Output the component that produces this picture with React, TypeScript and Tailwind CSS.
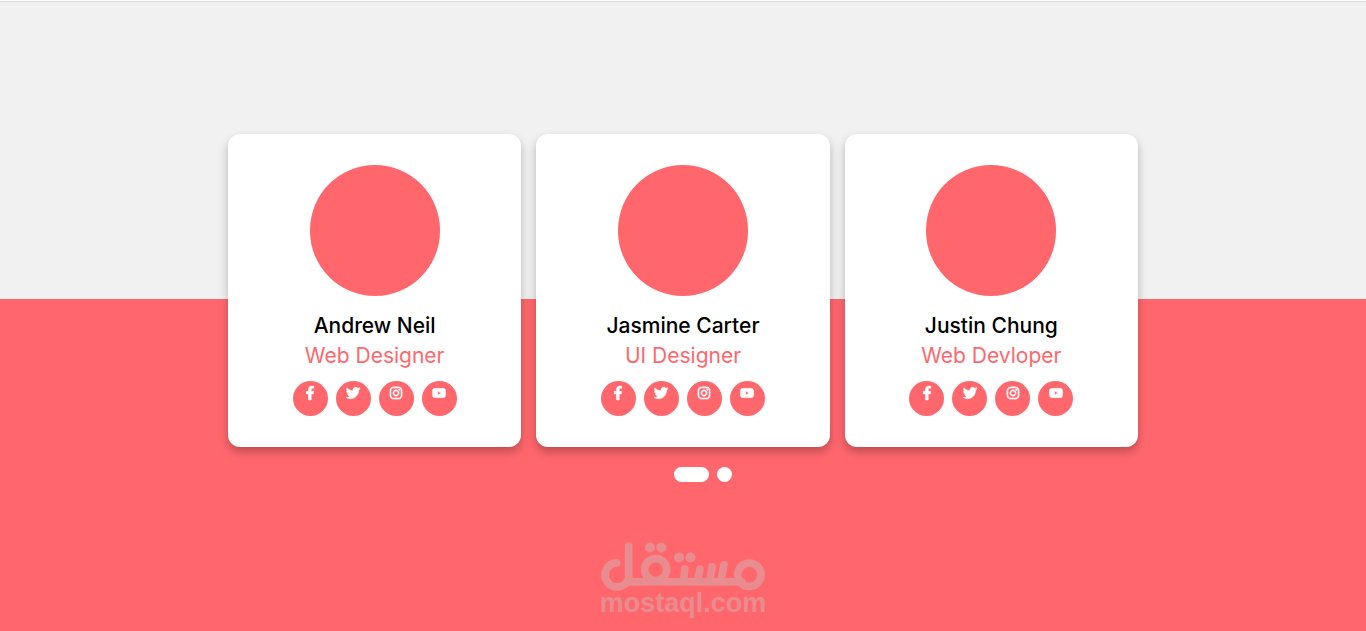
import { useState } from 'react';
import type { IconType } from 'react-icons';
import { FaFacebookF, FaInstagram, FaTwitter, FaYoutube } from 'react-icons/fa';

interface Member {
  name: string;
  job: string;
}

const members: Member[] = [
  { name: 'Andrew Neil', job: 'Web Designer' },
  { name: 'Jasmine Carter', job: 'UI Designer' },
  { name: 'Justin Chung', job: 'Web Devloper' },
];

const socials: { label: string; Icon: IconType }[] = [
  { label: 'Facebook', Icon: FaFacebookF },
  { label: 'Twitter', Icon: FaTwitter },
  { label: 'Instagram', Icon: FaInstagram },
  { label: 'YouTube', Icon: FaYoutube },
];

function MemberCard({ member }: { member: Member }) {
  return (
    <article className="flex flex-col items-center rounded-xl bg-white py-[31px] shadow-[0_5px_10px_rgba(0,0,0,0.25)]">
      <div className="h-[131px] w-[130px] rounded-full bg-[#ff676d]" />
      <h2 className="mt-[15px] text-[21px] leading-[30px] font-medium text-black">{member.name}</h2>
      <p className="text-[21px] leading-[30px] text-[#ff676d]">{member.job}</p>
      <div className="mt-[10px] flex gap-2">
        {socials.map(({ label, Icon }) => (
          <a
            key={label}
            href="#"
            aria-label={label}
            className="flex size-[35px] justify-center rounded-full bg-[#ff676d] pt-[5px] text-white"
          >
            <Icon className="h-[14px] w-auto overflow-visible stroke-[20]" />
          </a>
        ))}
      </div>
    </article>
  );
}

function Watermark() {
  return (
    <footer className="flex flex-col items-center text-[#e88c8f]">
      <svg viewBox="48 36 492 146" className="h-[49px] w-[164px]" fill="none" stroke="currentColor" strokeWidth="23" strokeLinecap="round" aria-hidden="true">
        <circle cx="493" cy="134" r="35" />
        <path d="M131 155H470M417 104L407 155M381 110L374 155M345 117L337 155M299 117L296 155" />
        <circle cx="212" cy="118" r="33" />
        <path d="M131 48V155" />
        <path d="M95 98A36 36 0 1 0 128 151" />
        <g fill="currentColor" stroke="none">
          <circle cx="195" cy="52" r="15" />
          <circle cx="229" cy="52" r="15" />
          <circle cx="282" cy="82" r="15" />
          <circle cx="316" cy="82" r="15" />
        </g>
      </svg>
      <p className="font-['Liberation_Sans',sans-serif] text-[27px] leading-6 font-bold">mostaql.com</p>
    </footer>
  );
}

export default function App() {
  const [page, setPage] = useState(0);

  return (
    <div className="flex min-h-screen flex-col items-center border-t border-white bg-[linear-gradient(to_bottom,#f1f1f1_47.3%,#ff676d_47.3%)] font-['Inter',sans-serif]">
      <div className="h-px w-full bg-[#dadcdc]" />
      <main className="w-full max-w-[910px] pt-[132px]">
        <section className="grid grid-cols-3 gap-[15px]">
          {members.map((member) => (
            <MemberCard key={member.name} member={member} />
          ))}
        </section>
        <nav className="mt-5 flex justify-center gap-2 pl-10">
          {[0, 1].map((i) => (
            <button
              key={i}
              type="button"
              aria-label={`Page ${i + 1}`}
              onClick={() => setPage(i)}
              className={i === page ? 'h-[15px] w-[35px] rounded-full bg-white' : 'size-[15px] rounded-full bg-white'}
            />
          ))}
        </nav>
      </main>
      <div className="mt-[60px]">
        <Watermark />
      </div>
    </div>
  );
}
